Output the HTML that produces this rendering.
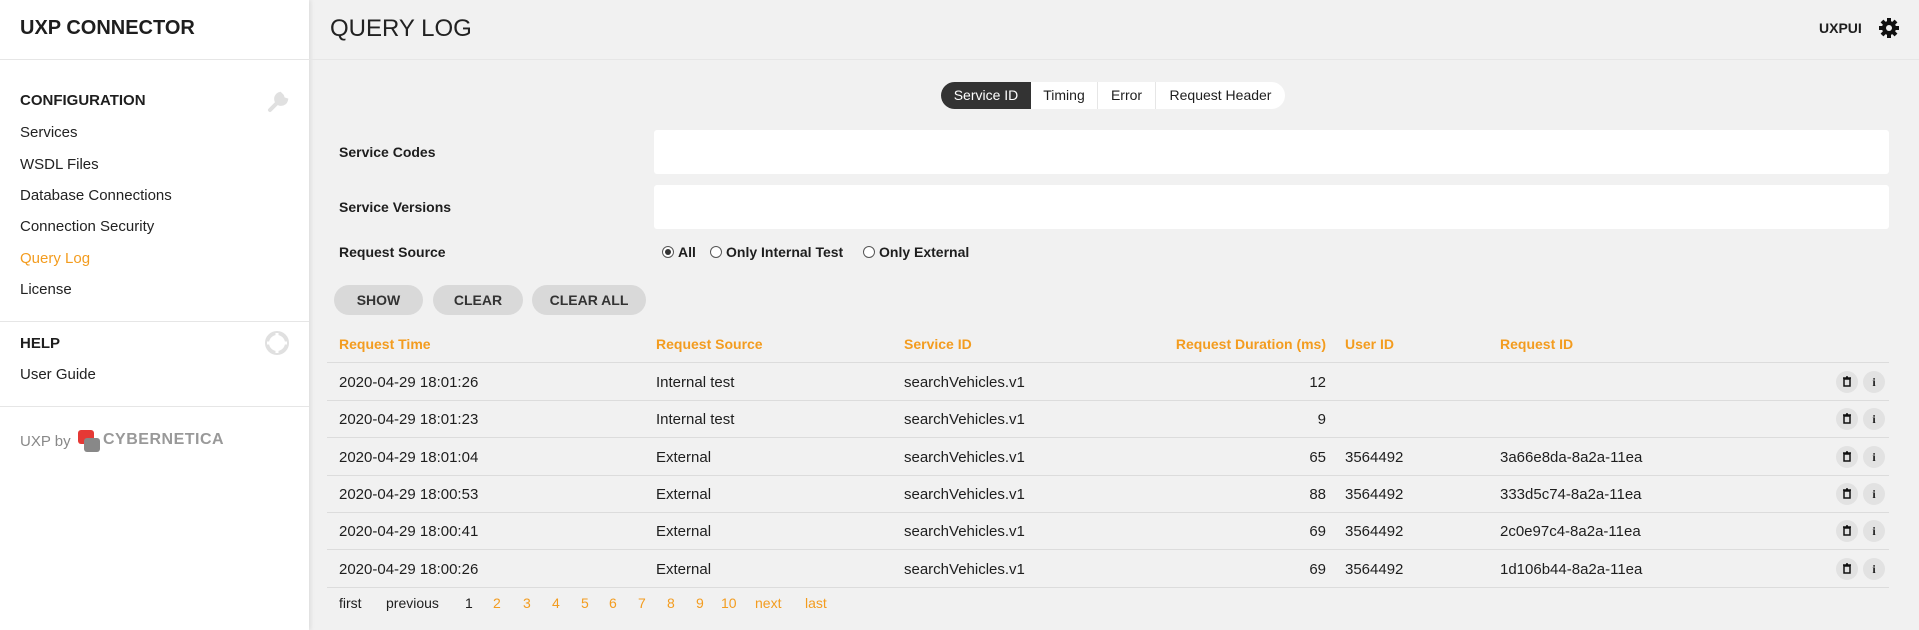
<!DOCTYPE html>
<html><head><meta charset="utf-8"><style>
*{box-sizing:border-box;margin:0;padding:0}
body{width:1919px;height:630px;background:#f1f1f1;font-family:"Liberation Sans",sans-serif;color:#1e1e1e;position:relative;overflow:hidden;font-size:15px}
.a{position:absolute;white-space:nowrap}
#side{position:absolute;left:0;top:0;width:309px;height:630px;background:#fff;box-shadow:2px 0 4px rgba(0,0,0,.08)}
.hl{position:absolute;left:0;height:1px;background:#e6e6e6}
.nav{left:20px;font-size:15px;color:#222}
.b{font-weight:bold}
.or{color:#f39c1f}
.inp{position:absolute;left:654px;width:1235px;height:44px;background:#fff;border-radius:3px}
.btn{position:absolute;top:285px;height:30px;background:#d9d9d9;border-radius:15px;font-weight:bold;font-size:14px;text-align:center;line-height:30px;color:#333}
.th{top:336px;font-weight:bold;font-size:14px;color:#f39c1f}
.row{position:absolute;left:327px;width:1562px;height:1px;background:#dcdcdc}
.ic{position:absolute;width:22px;height:22px;border-radius:11px;background:#e2e2e2}
.tab{position:absolute;top:82px;height:27px;line-height:27px;text-align:center;font-size:14px;background:#fff;border-left:1px solid #e6e6e6}
.rad{display:inline-block;width:12px;height:12px;border:1px solid #555;border-radius:6px;vertical-align:-1px;margin-right:4px;background:#fff;position:relative}
.pg{top:595px;font-size:14px}
</style></head><body>
<div id="side">
<div class="a b" style="left:20px;top:17px;font-size:20px">UXP CONNECTOR</div>
<div class="hl" style="top:59px;width:309px"></div>
<div class="a b" style="left:20px;top:92px;font-size:15px">CONFIGURATION</div>
<svg class="a" style="left:266px;top:90px" width="24" height="24" viewBox="0 0 24 24"><path d="M4 20 L13 11 M14 4 a5 5 0 1 0 6 6 l-3 -1 l-1 -3 z" stroke="#e0e0e0" stroke-width="4" fill="#e0e0e0" stroke-linecap="round"/></svg>
<div class="a nav" style="top:124px">Services</div>
<div class="a nav" style="top:156px">WSDL Files</div>
<div class="a nav" style="top:187px">Database Connections</div>
<div class="a nav" style="top:218px">Connection Security</div>
<div class="a nav or" style="top:250px;color:#f39c1f">Query Log</div>
<div class="a nav" style="top:281px">License</div>
<div class="hl" style="top:321px;width:309px"></div>
<div class="a b" style="left:20px;top:335px;font-size:15px">HELP</div>
<svg class="a" style="left:264px;top:330px" width="26" height="26" viewBox="0 0 26 26"><circle cx="13" cy="13" r="10" fill="none" stroke="#e0e0e0" stroke-width="4"/><path d="M13 3v20M3 13h20" stroke="#fff" stroke-width="3"/><circle cx="13" cy="13" r="5" fill="#fff"/></svg>
<div class="a nav" style="top:366px">User Guide</div>
<div class="hl" style="top:406px;width:309px"></div>
<div class="a" style="left:20px;top:433px;font-size:15px;color:#888">UXP by</div>
<svg class="a" style="left:78px;top:430px" width="22" height="22" viewBox="0 0 22 22"><rect x="0" y="0" width="16" height="14" rx="3" fill="#e53935"/><rect x="6" y="8" width="16" height="14" rx="3" fill="#888"/></svg>
<div class="a b" style="left:103px;top:431px;font-size:16px;color:#999;letter-spacing:.5px">CYBERNETICA</div>
</div>
<div class="hl" style="top:59px;left:309px;width:1610px"></div>
<div class="a" style="left:330px;top:15px;font-size:24px;color:#222">QUERY LOG</div>
<div class="a b" style="left:1819px;top:20px;font-size:14px">UXPUI</div>
<svg class="a" style="left:1878px;top:17px" width="22" height="22" viewBox="0 0 22 22"><g fill="#111"><circle cx="11" cy="11" r="7"/><g stroke="#111" stroke-width="4"><path d="M11 1v20M1 11h20M4 4l14 14M18 4L4 18"/></g></g><circle cx="11" cy="11" r="3" fill="#f1f1f1"/></svg>
<div class="tab" style="left:941px;width:90px;background:#333;color:#fff;border-radius:14px 0 0 14px;border:0">Service ID</div>
<div class="tab" style="left:1031px;width:66px;border:0">Timing</div>
<div class="tab" style="left:1097px;width:58px">Error</div>
<div class="tab" style="left:1155px;width:130px;border-radius:0 14px 14px 0">Request Header</div>
<div class="a b" style="left:339px;top:144px;font-size:14px">Service Codes</div>
<div class="inp" style="top:130px"></div>
<div class="a b" style="left:339px;top:199px;font-size:14px">Service Versions</div>
<div class="inp" style="top:185px"></div>
<div class="a b" style="left:339px;top:244px;font-size:14px">Request Source</div>
<div class="a b" style="left:662px;top:244px;font-size:14px"><span class="rad"><span style="position:absolute;left:2px;top:2px;width:6px;height:6px;border-radius:3px;background:#333"></span></span>All</div>
<div class="a b" style="left:710px;top:244px;font-size:14px"><span class="rad"></span>Only Internal Test</div>
<div class="a b" style="left:863px;top:244px;font-size:14px"><span class="rad"></span>Only External</div>
<div class="btn" style="left:334px;width:89px">SHOW</div>
<div class="btn" style="left:433px;width:90px">CLEAR</div>
<div class="btn" style="left:532px;width:114px">CLEAR ALL</div>
<div class="a th" style="left:339px">Request Time</div>
<div class="a th" style="left:656px">Request Source</div>
<div class="a th" style="left:904px">Service ID</div>
<div class="a th" style="left:1126px;width:200px;text-align:right">Request Duration (ms)</div>
<div class="a th" style="left:1345px">User ID</div>
<div class="a th" style="left:1500px">Request ID</div>
<div class="row" style="top:362px"></div>
<div id="rows"></div>
<div class="a pg" style="left:339px">first</div>
<div class="a pg" style="left:386px">previous</div>
<div class="a pg" style="left:465px">1</div>
<div class="a pg or" style="left:493px">2</div>
<div class="a pg or" style="left:523px">3</div>
<div class="a pg or" style="left:552px">4</div>
<div class="a pg or" style="left:581px">5</div>
<div class="a pg or" style="left:609px">6</div>
<div class="a pg or" style="left:638px">7</div>
<div class="a pg or" style="left:667px">8</div>
<div class="a pg or" style="left:696px">9</div>
<div class="a pg or" style="left:721px">10</div>
<div class="a pg or" style="left:755px">next</div>
<div class="a pg or" style="left:805px">last</div>
<script>
var d=[["18:01:26","Internal test","12","",""],["18:01:23","Internal test","9","",""],["18:01:04","External","65","3564492","3a66e8da-8a2a-11ea"],["18:00:53","External","88","3564492","333d5c74-8a2a-11ea"],["18:00:41","External","69","3564492","2c0e97c4-8a2a-11ea"],["18:00:26","External","69","3564492","1d106b44-8a2a-11ea"]];
var h="";d.forEach(function(r,i){var y=363+i*37.3;var t=y+11;
h+='<div class="a" style="left:339px;top:'+t+'px">2020-04-29 '+r[0]+'</div><div class="a" style="left:656px;top:'+t+'px">'+r[1]+'</div><div class="a" style="left:904px;top:'+t+'px">searchVehicles.v1</div><div class="a" style="left:1226px;width:100px;text-align:right;top:'+t+'px">'+r[2]+'</div><div class="a" style="left:1345px;top:'+t+'px">'+r[3]+'</div><div class="a" style="left:1500px;top:'+t+'px">'+r[4]+'</div>';
h+='<div class="ic" style="left:1836px;top:'+(y+8)+'px"><svg width="22" height="22" viewBox="0 0 22 22"><path d="M8 8h6v7h-6z M7 7h8 M10 6h2" stroke="#111" stroke-width="1.5" fill="none"/></svg></div><div class="ic" style="left:1863px;top:'+(y+8)+'px;text-align:center;font-weight:bold;font-size:12px;line-height:22px;font-family:\'Liberation Serif\',serif">i</div>';
h+='<div class="row" style="top:'+(y+37)+'px"></div>';});
document.getElementById("rows").innerHTML=h;
</script>
</body></html>
